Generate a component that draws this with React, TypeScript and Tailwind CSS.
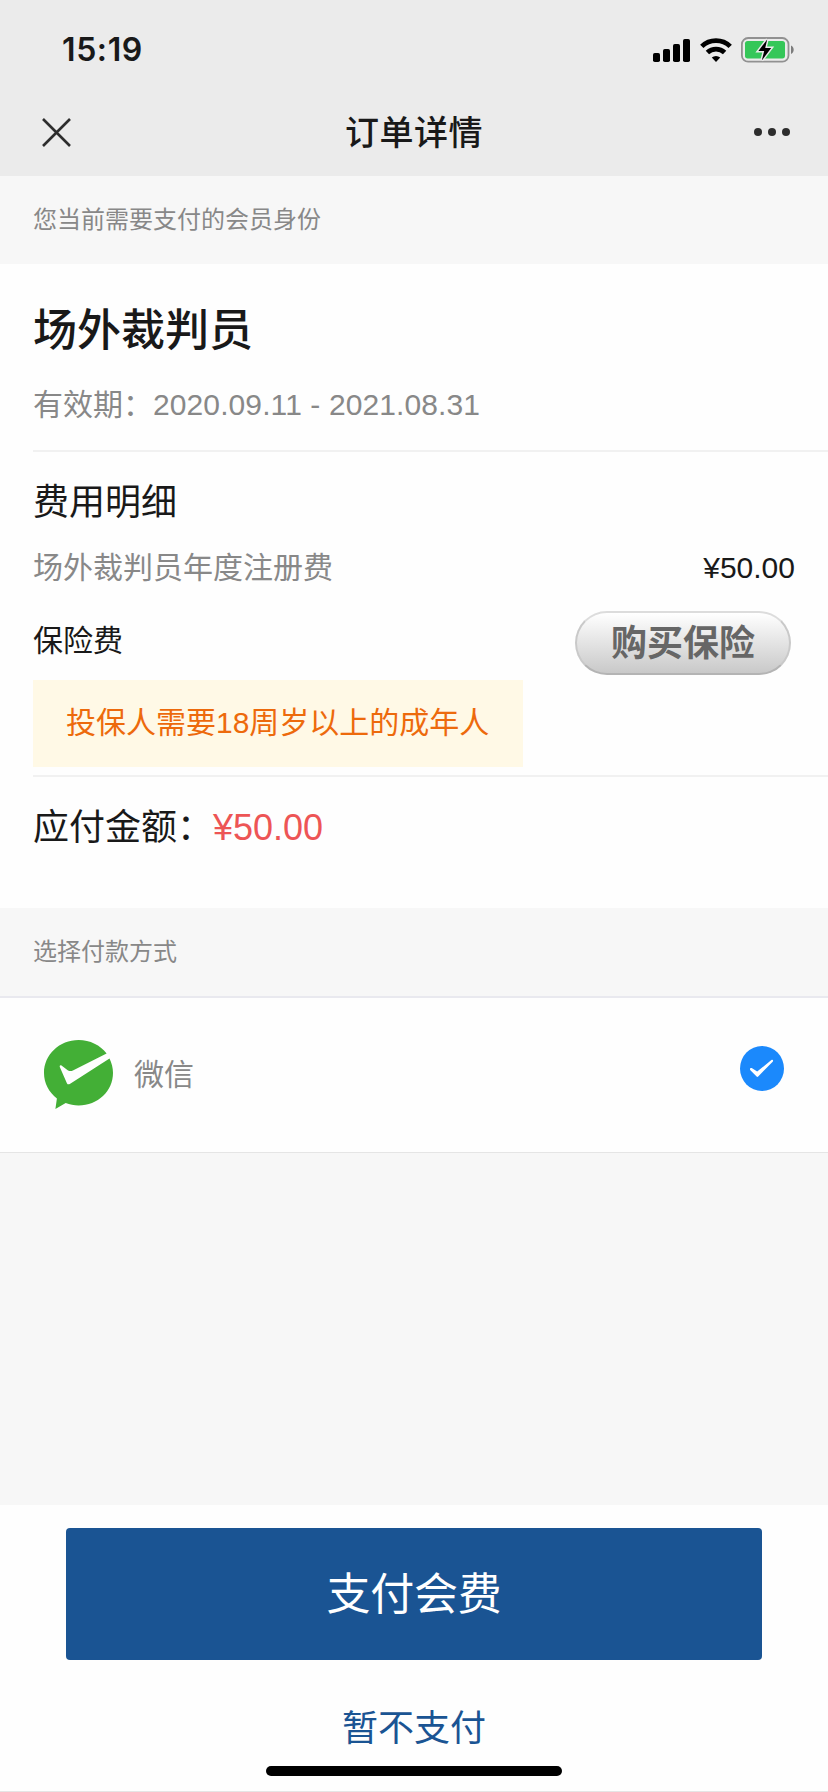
import type { ReactNode } from "react";

function SignalIcon() {
  return (
    <svg width="37" height="23" viewBox="0 0 37 23" fill="#000">
      <rect x="0" y="14" width="7" height="9" rx="1.8" />
      <rect x="10" y="10" width="7" height="13" rx="1.8" />
      <rect x="20" y="5" width="7" height="18" rx="1.8" />
      <rect x="30" y="0" width="7" height="23" rx="1.8" />
    </svg>
  );
}

function WifiIcon() {
  return (
    <svg width="32" height="24" viewBox="0 0 32 24" fill="none" stroke="#000" strokeWidth="4.8">
      <path d="M1.8 8.4a20.4 20.4 0 0 1 28.4 0" />
      <path d="M7.400 14.500a12.400 12.400 0 0 1 17.200 0" />
      <path d="M16 24l-4.200-4.400a6 6 0 0 1 8.400 0z" fill="#000" stroke="none" />
    </svg>
  );
}

function BatteryIcon() {
  return (
    <svg width="54" height="26" viewBox="0 0 54 26" fill="none">
      <rect x="0.9" y="1" width="46.6" height="23.6" rx="6.2" stroke="#919191" strokeWidth="1.8" />
      <path d="M50 8.6c3.6 1.4 3.6 7 0 8.4z" fill="#7c7c7c" />
      <rect x="4" y="4" width="40" height="17.4" rx="2.6" fill="#35c759" />
      <path
        d="M26.200 2.400L17.400 14h5.800L20.800 23.400 30.200 11h-6z"
        fill="#000"
        stroke="#ebebeb"
        strokeWidth="3"
        paintOrder="stroke"
      />
    </svg>
  );
}

function WechatPayIcon() {
  return (
    <svg width="70" height="70" viewBox="0 0 70 70">
      <path
        fill="#43af36"
        d="M62.6 13.6C56.4 5.2 46 0 34.6 0 15.4 0 0 14.700 0 33c0 10.200 5 19.400 12.900 25.400L11.400 69l10.300-6c4 1.600 8.400 2.500 12.900 2.500 19.200 0 34.400-14.500 34.400-32.500 0-5.200-1.300-10.100-3.500-14.500L25.800 43.900c-1.200.8-2.300.6-2.900-.7L15.900 27.200c-.6-1.700.4-2.500 1.600-1.600l6.200 4.600c1.600 1.100 3.400 1.200 5.200.4z"
      />
    </svg>
  );
}

function SelectedIcon() {
  return (
    <svg width="44" height="45" viewBox="0 0 44 45">
      <ellipse cx="22" cy="22.500" rx="22" ry="22.500" fill="#1b89fc" />
      <path
        fill="#fff"
        d="M10.400 24.200c-1.200-1.300.2-2.900 1.700-2l5.100 3.300L31.400 14.100c1.300-.8 2.300.4 1.300 1.600L18.200 30.500c-.6.500-1.100.5-1.600 0z"
      />
    </svg>
  );
}

function StatusBar() {
  return (
    <div className="flex h-[88px] items-center justify-between pt-3 pr-[33px] pl-[62px]">
      <span className="font-[Inter] text-[32px] leading-8 font-semibold tracking-[0.6px]">
        15:19
      </span>
      <div className="flex items-center">
        <SignalIcon />
        <div className="ml-[10px]">
          <WifiIcon />
        </div>
        <div className="ml-[9px]">
          <BatteryIcon />
        </div>
      </div>
    </div>
  );
}

function NavBar() {
  return (
    <div className="grid h-[88px] grid-cols-3 items-center">
      <button className="ml-[42px] justify-self-start">
        <svg width="29" height="29" viewBox="0 0 29 29" stroke="#2d2d2d" strokeWidth="2.600">
          <path d="M1 1l27 27M28 1L1 28" />
        </svg>
      </button>
      <h1 className="pt-0.5 text-center text-[34px] font-medium tracking-[0.5px]">订单详情</h1>
      <button className="mr-[38px] flex gap-[6px] justify-self-end">
        <span className="size-2 rounded-full bg-[#2d2d2d]" />
        <span className="size-2 rounded-full bg-[#2d2d2d]" />
        <span className="size-2 rounded-full bg-[#2d2d2d]" />
      </button>
    </div>
  );
}

function SectionTitle({ children }: { children: ReactNode }) {
  return (
    <h2 className="h-[88px] bg-[#f7f7f7] pl-[33px] text-2xl leading-[88px] text-[#888]">
      {children}
    </h2>
  );
}

export default function App() {
  return (
    <div className="flex h-[1792px] w-[828px] flex-col bg-[#f7f7f7] font-['Liberation_Sans','Noto_Sans_CJK_SC',sans-serif] text-[#191919]">
      <header className="bg-[#ebebeb]">
        <StatusBar />
        <NavBar />
      </header>

      <SectionTitle>您当前需要支付的会员身份</SectionTitle>

      <main className="h-[644px] bg-[#fefefe] pl-[33px]">
        <div className="h-[188px] border-b-2 border-[#f1f1f1] pt-[37px]">
          <h3 className="text-[44px] leading-[60px] font-medium">场外裁判员</h3>
          <p className="mt-6 text-[30px] leading-10 text-[#888]">
            有效期：<span className="tracking-[0.1px]">2020.09.11 - 2021.08.31</span>
          </p>
        </div>

        <div className="h-[325px] border-b-2 border-[#f1f1f1] pt-[26px]">
          <h3 className="text-4xl leading-[50px]">费用明细</h3>
          <div className="mt-5 flex justify-between pr-[33px] text-[30px] leading-10">
            <span className="text-[#888]">场外裁判员年度注册费</span>
            <span>¥50.00</span>
          </div>
          <div className="mt-[23px] flex h-16 justify-between pr-[37px]">
            <span className="pt-[10px] text-[30px] leading-10">保险费</span>
            <button className="h-16 w-[216px] rounded-full border-2 border-t-[#dcdcdc] border-r-[#c9c9c9] border-b-[#b4b4b4] border-l-[#c9c9c9] bg-linear-to-b from-white to-[#c9c9c9] pt-px text-4xl leading-[60px] font-bold text-[#666]">
              购买保险
            </button>
          </div>
          <div className="mt-[5px] h-[87px] w-[490px] bg-[#fff9e6] pl-[33px] text-[30px] leading-[85px] text-[#ed6a0c]">
            投保人需要18周岁以上的成年人
          </div>
        </div>

        <p className="pt-[26px] text-4xl leading-[50px]">
          应付金额：<span className="text-[#ed5555]">¥50.00</span>
        </p>
      </main>

      <SectionTitle>选择付款方式</SectionTitle>

      <div className="flex h-[157px] items-center border-t-2 border-b border-t-[#e9e9ef] border-b-[#e5e5e5] bg-[#fefefe] pr-11 pl-11">
        <WechatPayIcon />
        <span className="ml-5 text-[30px] leading-10 text-[#888]">微信</span>
        <div className="mb-[13px] ml-auto">
          <SelectedIcon />
        </div>
      </div>

      <footer className="mt-auto flex h-[287px] flex-col items-center border-b border-[#e5e5e5] bg-[#fefefe] pt-[23px]">
        <button className="h-[132px] w-[696px] rounded bg-[#1a5493] pt-0.5 text-[44px] leading-[130px] tracking-[-0.3px] text-white">
          支付会费
        </button>
        <button className="mt-11 text-4xl leading-[50px] text-[#1a5493]">暂不支付</button>
        <div className="mt-3 h-[10px] w-[296px] rounded-full bg-black" />
      </footer>
    </div>
  );
}
